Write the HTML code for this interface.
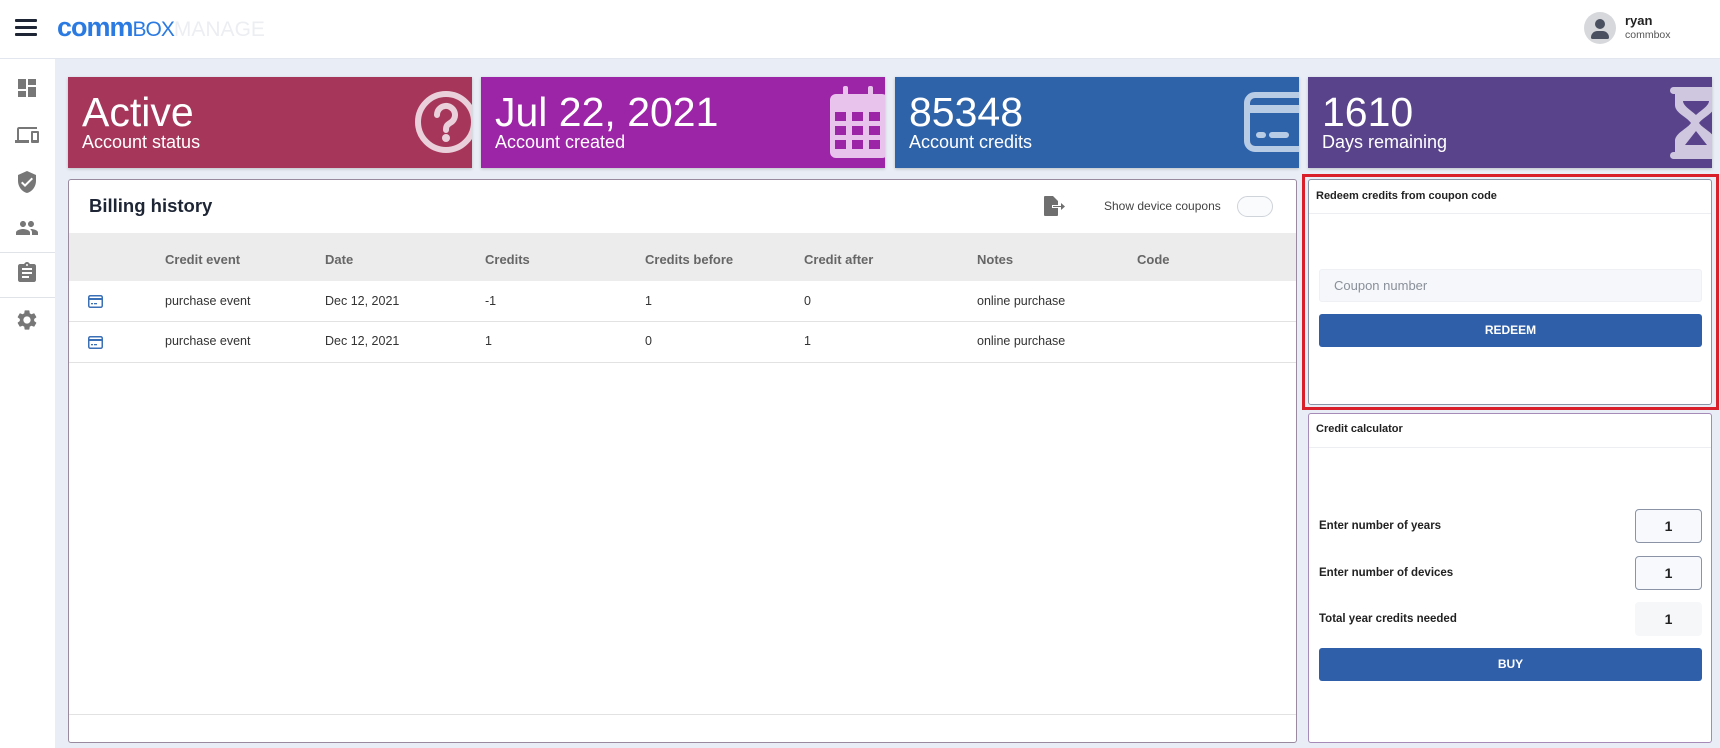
<!DOCTYPE html>
<html><head><meta charset="utf-8"><style>
*{box-sizing:border-box;margin:0;padding:0}
body{width:1720px;height:748px;overflow:hidden;background:#e9edf5;font-family:"Liberation Sans",sans-serif;position:relative;color:#222}
.abs{position:absolute}
.header{left:0;top:0;width:1720px;height:59px;background:#fff;border-bottom:1px solid #e2e6ee}
.side{left:0;top:59px;width:55px;height:689px;background:#fff}
.card{position:absolute;top:77px;height:91px;width:404px;color:#fff;overflow:hidden;box-shadow:0 1px 3px rgba(0,0,0,.2)}
.card .big{position:absolute;left:14px;top:15px;font-size:41px;line-height:1;font-weight:300}
.card .sm{position:absolute;left:14px;top:55px;font-size:18px}
.panel{position:absolute;background:#fff;border:1px solid #9a8aa0;border-radius:3px}
.th{position:absolute;top:252px;font-size:13px;color:#666;font-weight:bold}
.td{position:absolute;font-size:12.5px;color:#333}
.lbl{position:absolute;left:1319px;font-size:11.5px;font-weight:bold;color:#222}
.num{position:absolute;left:1635px;width:67px;height:34px;border:1px solid #8a94a6;border-radius:4px;background:#f7f9fc;text-align:center;line-height:32px;font-weight:bold;font-size:14px}
.btn{position:absolute;left:1319px;width:383px;height:33px;background:#2f5fa8;border-radius:3px;color:#fff;text-align:center;line-height:33px;font-weight:bold;font-size:12px}
</style></head><body>
<div class="abs header"></div>
<div class="abs" style="left:15px;top:19px;width:22px;height:3px;background:#1e2535;border-radius:1px"></div>
<div class="abs" style="left:15px;top:26px;width:22px;height:3px;background:#1e2535;border-radius:1px"></div>
<div class="abs" style="left:15px;top:33px;width:22px;height:3px;background:#1e2535;border-radius:1px"></div>
<div class="abs" style="left:57px;top:14px;white-space:nowrap;line-height:1"><span style="font-size:27px;font-weight:bold;color:#2a7ae2;letter-spacing:-1px">comm</span><span style="font-size:21px;color:#2a7ae2;letter-spacing:-1px">BOX</span><span style="font-size:21px;color:#eceef2">MANAGE</span></div>
<div class="abs" style="left:1584px;top:12px;width:32px;height:32px;border-radius:50%;background:#d6d8db;overflow:hidden">
<div class="abs" style="left:11px;top:7px;width:10px;height:10px;border-radius:50%;background:#4a5060"></div>
<div class="abs" style="left:7px;top:19px;width:18px;height:8px;border-radius:8px 8px 2px 2px;background:#4a5060"></div></div>
<div class="abs" style="left:1625px;top:13px;font-size:13px;font-weight:bold;color:#222">ryan</div>
<div class="abs" style="left:1625px;top:29px;font-size:10.5px;color:#555">commbox</div>

<div class="abs side"></div>
<div class="abs" style="left:0;top:252px;width:55px;height:1px;background:#e0e3e8"></div>
<div class="abs" style="left:0;top:297px;width:55px;height:1px;background:#e0e3e8"></div>
<svg class="abs" style="left:15px;top:76px" width="24" height="24" viewBox="0 0 24 24" fill="#777"><path d="M3 13h8V3H3v10zm0 8h8v-6H3v6zm10 0h8V11h-8v10zm0-18v6h8V3h-8z"/></svg>
<svg class="abs" style="left:15px;top:123px" width="24" height="24" viewBox="0 0 24 24" fill="#777"><path d="M4 6h18V4H4c-1.1 0-2 .9-2 2v11H0v3h14v-3H4V6zm19 2h-6c-.55 0-1 .45-1 1v10c0 .55.45 1 1 1h6c.55 0 1-.45 1-1V9c0-.55-.45-1-1-1zm-1 9h-4v-7h4v7z"/></svg>
<svg class="abs" style="left:15px;top:170px" width="24" height="24" viewBox="0 0 24 24" fill="#777"><path d="M12 1L3 5v6c0 5.550 3.84 10.74 9 12 5.16-1.26 9-6.45 9-12V5l-9-4zm-2 16l-4-4 1.41-1.41L10 14.17l6.59-6.59L18 9l-8 8z"/></svg>
<svg class="abs" style="left:15px;top:216px" width="24" height="24" viewBox="0 0 24 24" fill="#777"><path d="M16 11c1.66 0 2.990-1.34 2.99-3S17.66 5 16 5c-1.66 0-3 1.34-3 3s1.34 3 3 3zm-8 0c1.66 0 2.99-1.34 2.99-3S9.66 5 8 5C6.34 5 5 6.34 5 8s1.34 3 3 3zm0 2c-2.33 0-7 1.17-7 3.5V19h14v-2.5c0-2.33-4.67-3.5-7-3.5zm8 0c-.29 0-.62.02-.97.05 1.16.84 1.97 1.97 1.97 3.45V19h6v-2.5c0-2.33-4.67-3.5-7-3.5z"/></svg>
<svg class="abs" style="left:15px;top:261px" width="24" height="24" viewBox="0 0 24 24" fill="#777"><path d="M19 3h-4.18C14.4 1.84 13.3 1 12 1s-2.4.84-2.82 2H5c-1.1 0-2 .9-2 2v14c0 1.1.9 2 2 2h14c1.1 0 2-.9 2-2V5c0-1.1-.9-2-2-2zm-7 0c.55 0 1 .45 1 1s-.45 1-1 1-1-.45-1-1 .45-1 1-1zm2 14H7v-2h7v2zm3-4H7v-2h10v2zm0-4H7V7h10v2z"/></svg>
<svg class="abs" style="left:15px;top:308px" width="24" height="24" viewBox="0 0 24 24" fill="#777"><path d="M19.14 12.94c.04-.3.06-.61.06-.94 0-.32-.02-.64-.07-.94l2.03-1.58a.49.49 0 00.12-.61l-1.92-3.32a.488.488 0 00-.59-.22l-2.39.96c-.5-.38-1.03-.7-1.62-.94l-.36-2.54a.484.484 0 00-.48-.41h-3.84c-.24 0-.43.17-.47.41l-.36 2.54c-.59.24-1.13.57-1.62.94l-2.39-.96c-.22-.08-.47 0-.59.22L2.74 8.87c-.12.21-.08.47.12.61l2.03 1.58c-.05.3-.09.63-.09.94s.02.64.07.94l-2.03 1.58a.49.49 0 00-.12.61l1.92 3.32c.12.22.37.29.59.22l2.39-.96c.5.38 1.03.7 1.62.94l.36 2.54c.05.24.24.41.48.41h3.84c.24 0 .44-.17.47-.41l.36-2.54c.59-.24 1.13-.56 1.62-.94l2.39.96c.22.08.47 0 .59-.22l1.92-3.32c.12-.22.07-.47-.12-.61l-2.01-1.58zM12 15.6c-1.98 0-3.6-1.62-3.6-3.6s1.62-3.6 3.6-3.6 3.6 1.62 3.6 3.6-1.62 3.6-3.6 3.6z"/></svg>

<div class="card" style="left:68px;background:#a6375a">
<div class="big">Active</div><div class="sm">Account status</div>
<svg class="abs" style="left:346px;top:12px" width="66" height="66" viewBox="0 0 66 66"><circle cx="32" cy="33" r="28" fill="none" stroke="#ead0da" stroke-width="6"/><path d="M23 26a9 9 0 1 1 13 8c-3 2-4 3-4 7" fill="none" stroke="#ead0da" stroke-width="6" stroke-linecap="round"/><circle cx="32" cy="49" r="4" fill="#ead0da"/></svg>
</div>
<div class="card" style="left:481px;background:#9c24a6">
<div class="big">Jul 22, 2021</div><div class="sm">Account created</div>
<svg class="abs" style="left:349px;top:9px" width="58" height="72" viewBox="0 0 58 72" fill="#e8c3ec"><rect x="13" y="0" width="5" height="12" rx="2"/><rect x="38" y="0" width="5" height="12" rx="2"/><path d="M6 8h46a6 6 0 0 1 6 6v52a6 6 0 0 1-6 6H6a6 6 0 0 1-6-6V14a6 6 0 0 1 6-6z"/><g fill="#9c24a6"><rect x="5" y="26" width="11" height="9"/><rect x="22" y="26" width="11" height="9"/><rect x="39" y="26" width="11" height="9"/><rect x="5" y="40" width="11" height="9"/><rect x="22" y="40" width="11" height="9"/><rect x="39" y="40" width="11" height="9"/><rect x="5" y="54" width="11" height="9"/><rect x="22" y="54" width="11" height="9"/><rect x="39" y="54" width="11" height="9"/></g></svg>
</div>
<div class="card" style="left:895px;background:#2e63a9">
<div class="big">85348</div><div class="sm">Account credits</div>
<svg class="abs" style="left:349px;top:15px" width="60" height="60" viewBox="0 0 60 60"><rect x="3" y="3" width="62" height="54" rx="8" fill="none" stroke="#b9cce6" stroke-width="6"/><rect x="3" y="13" width="60" height="8" fill="#b9cce6"/><rect x="12" y="40" width="10" height="6" rx="3" fill="#b9cce6"/><rect x="25" y="40" width="20" height="6" rx="3" fill="#b9cce6"/></svg>
</div>
<div class="card" style="left:1308px;background:#59448c">
<div class="big">1610</div><div class="sm">Days remaining</div>
<svg class="abs" style="left:362px;top:10px" width="42" height="72" viewBox="0 0 42 72" fill="#cfc7df"><rect x="0" y="0" width="48" height="7" rx="3.5"/><rect x="0" y="65" width="48" height="7" rx="3.5"/><path d="M5 6h40v12c0 8-12 12-16 18 4 6 16 10 16 18v12H5V54c0-8 12-12 16-18C17 30 5 26 5 18z"/><path d="M13 14h26c0 5-9 10-13 14-4-4-13-9-13-14zM26 44l11 14H15z" fill="#59448c"/></svg>
</div>

<div class="panel" style="left:68px;top:179px;width:1229px;height:564px"></div>
<div class="abs" style="left:89px;top:195px;font-size:18.5px;font-weight:bold;color:#1e2535">Billing history</div>
<svg class="abs" style="left:1044px;top:196px" width="22" height="20" viewBox="0 0 22 20" fill="#6f6f6f"><path d="M0 1a1 1 0 0 1 1-1h8l5 5v4H8v3h6v7a1 1 0 0 1-1 1H1a1 1 0 0 1-1-1z"/><path d="M9 10h8V7l4 3.5-4 3.5v-3H9z"/></svg>
<div class="abs" style="left:1104px;top:199px;font-size:12px;color:#444">Show device coupons</div>
<div class="abs" style="left:1237px;top:196px;width:36px;height:21px;border:1px solid #cfd3da;border-radius:11px;background:#fafbfc"></div>
<div class="abs" style="left:69px;top:233px;width:1227px;height:48px;background:#ececec"></div>
<div class="th" style="left:165px">Credit event</div>
<div class="th" style="left:325px">Date</div>
<div class="th" style="left:485px">Credits</div>
<div class="th" style="left:645px">Credits before</div>
<div class="th" style="left:804px">Credit after</div>
<div class="th" style="left:977px">Notes</div>
<div class="th" style="left:1137px">Code</div>
<div class="abs" style="left:69px;top:321px;width:1227px;height:1px;background:#e2e2e2"></div>
<div class="abs" style="left:69px;top:362px;width:1227px;height:1px;background:#e2e2e2"></div>
<div class="abs" style="left:69px;top:714px;width:1227px;height:1px;background:#e2e2e2"></div>
<svg class="abs" style="left:88px;top:295px" width="15" height="13" viewBox="0 0 15 13"><rect x="0.75" y="0.75" width="13.5" height="11.5" rx="1.5" fill="none" stroke="#3b6fb6" stroke-width="1.5"/><rect x="1" y="3" width="13" height="2" fill="#3b6fb6"/><rect x="3" y="8" width="2" height="1.3" fill="#3b6fb6"/><rect x="6" y="8" width="3" height="1.3" fill="#3b6fb6"/></svg>
<svg class="abs" style="left:88px;top:336px" width="15" height="13" viewBox="0 0 15 13"><rect x="0.75" y="0.75" width="13.5" height="11.5" rx="1.5" fill="none" stroke="#3b6fb6" stroke-width="1.5"/><rect x="1" y="3" width="13" height="2" fill="#3b6fb6"/><rect x="3" y="8" width="2" height="1.3" fill="#3b6fb6"/><rect x="6" y="8" width="3" height="1.3" fill="#3b6fb6"/></svg>
<div class="td" style="left:165px;top:294px">purchase event</div>
<div class="td" style="left:325px;top:294px">Dec 12, 2021</div>
<div class="td" style="left:485px;top:294px">-1</div>
<div class="td" style="left:645px;top:294px">1</div>
<div class="td" style="left:804px;top:294px">0</div>
<div class="td" style="left:977px;top:294px">online purchase</div>
<div class="td" style="left:165px;top:334px">purchase event</div>
<div class="td" style="left:325px;top:334px">Dec 12, 2021</div>
<div class="td" style="left:485px;top:334px">1</div>
<div class="td" style="left:645px;top:334px">0</div>
<div class="td" style="left:804px;top:334px">1</div>
<div class="td" style="left:977px;top:334px">online purchase</div>

<div class="abs" style="left:1302px;top:174px;width:417px;height:236px;border:3px solid #d81f2a"></div>
<div class="panel" style="left:1308px;top:179px;width:404px;height:226px;border-color:#8a94a6"></div>
<div class="abs" style="left:1316px;top:190px;font-size:11px;font-weight:bold;color:#222">Redeem credits from coupon code</div>
<div class="abs" style="left:1309px;top:213px;width:402px;height:1px;background:#eceef2"></div>
<div class="abs" style="left:1319px;top:269px;width:383px;height:33px;background:#f5f7fa;border:1px solid #eef0f3;border-radius:3px;padding-left:14px;line-height:31px;font-size:13px;color:#8a909a">Coupon number</div>
<div class="btn" style="top:314px">REDEEM</div>

<div class="panel" style="left:1308px;top:413px;width:404px;height:330px;border-color:#a68ab8"></div>
<div class="abs" style="left:1316px;top:423px;font-size:11px;font-weight:bold;color:#222">Credit calculator</div>
<div class="abs" style="left:1309px;top:447px;width:402px;height:1px;background:#eceef2"></div>
<div class="lbl" style="top:520px">Enter number of years</div>
<div class="num" style="top:509px">1</div>
<div class="lbl" style="top:567px">Enter number of devices</div>
<div class="num" style="top:556px">1</div>
<div class="lbl" style="top:613px">Total year credits needed</div>
<div class="num" style="top:602px;border-color:transparent;background:#f6f7f9">1</div>
<div class="btn" style="top:648px">BUY</div>
</body></html>
